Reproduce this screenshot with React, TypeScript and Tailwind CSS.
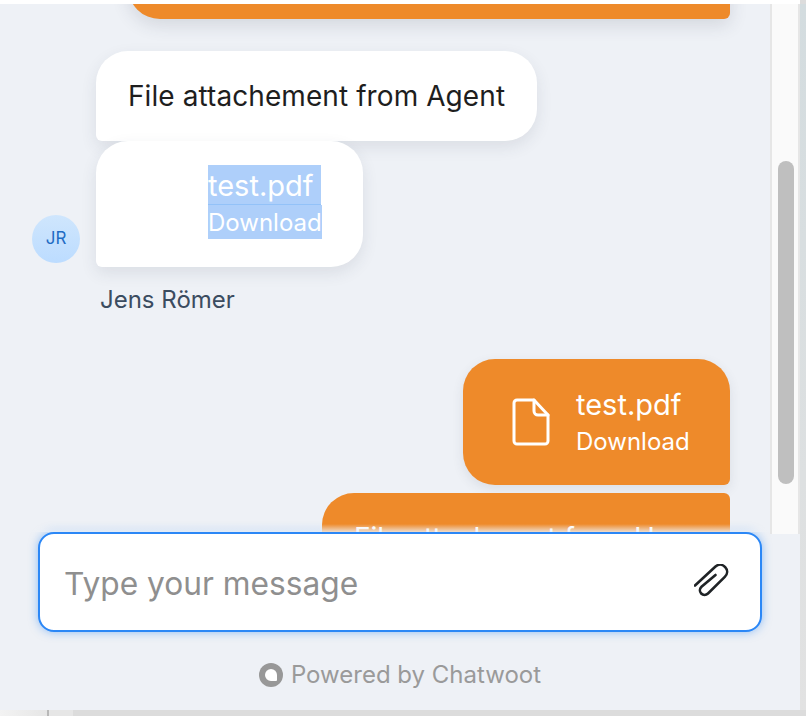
const font = { fontFamily: "Inter, 'Noto Sans', sans-serif" };

function FileIcon() {
  return (
    <svg width="40" height="48" viewBox="0 0 40 48" fill="none" stroke="white" strokeWidth="3" strokeLinejoin="round" strokeLinecap="round">
      <path d="M6 2h17l14 15v26a3 3 0 0 1-3 3H6a3 3 0 0 1-3-3V5a3 3 0 0 1 3-3z" />
      <path d="M23 2v11a4 4 0 0 0 4 4h10" />
    </svg>
  );
}

function AttachIcon() {
  return (
    <svg width="36" height="36" viewBox="0 0 36 36" fill="none" stroke="#1f2326" strokeWidth="2.6" strokeLinecap="round">
      <path d="M1 21.500 21.500 2.500c3-2.600 7-2.200 9.700 0.600 2.700 2.900 2.500 7-0.400 9.800L14 29.500c-2 1.900-5 1.900-6.800 0-1.800-1.900-1.700-4.800 0.300-6.700L21.500 11" />
    </svg>
  );
}

function ChatwootLogo() {
  return (
    <svg width="24" height="24" viewBox="0 0 24 24">
      <circle cx="12" cy="12" r="12" fill="#989898" />
      <path d="M12 6a6 6 0 0 1 6 6v5a1 1 0 0 1-1 1h-5a6 6 0 0 1 0-12z" fill="white" />
    </svg>
  );
}

function Scrollbar() {
  return (
    <div className="h-[530px] w-[30px] shrink-0 border-l-2 border-r-2 border-[#e6e6e6] bg-[#fafafa] px-[6px] pt-[157px]">
      <div className="h-[323px] w-4 rounded-full bg-[#bfbfbf]" />
    </div>
  );
}

export default function App() {
  return (
    <div className="flex h-[716px] w-[806px] flex-col overflow-hidden bg-[#dcdcdc]" style={font}>
      <div className="h-1 w-[800px] shrink-0 bg-white" />
      <div className="flex h-[706px] shrink-0">
        <div className="flex w-[800px] shrink-0 flex-col bg-[#eef1f6]">
          <div className="flex h-[528px] shrink-0">
            <div className="relative min-w-0 flex-1 overflow-hidden pl-8 pr-10">
              <div className="-mt-[45px] flex flex-col">
                <div className="ml-24 h-[60px] rounded-b-[32px] rounded-br-[6px] bg-[#ee8a2a] shadow-[0_6px_18px_rgba(50,60,80,0.14)]" />
                <div className="mt-8 flex items-end gap-4">
                  <div className="mb-1 flex h-12 w-12 items-center justify-center rounded-full bg-gradient-to-b from-[#cfe6fd] to-[#bcdcff] text-[17px] text-[#1f6cc4]">
                    JR
                  </div>
                  <div className="flex flex-col items-start">
                    <div className="flex h-[90px] w-[441px] items-center whitespace-nowrap rounded-[32px] rounded-bl-[6px] bg-white px-8 text-[28px] tracking-[0.08px] text-[#1e1e1e] shadow-[0_6px_16px_rgba(50,60,80,0.1)]">
                      File attachement from Agent
                    </div>
                    <div className="flex h-[126px] w-[267px] flex-col justify-center rounded-[32px] rounded-bl-[6px] bg-white pb-1 pl-28 text-white shadow-[0_6px_16px_rgba(50,60,80,0.1)]">
                      <span className="h-10 w-[113px] border-b border-[#93c2f8] bg-[#aecffa] text-[29px] leading-[42px]">test.pdf</span>
                      <span className="h-[34px] w-[114px] bg-[#aecffa] text-[24px] leading-[35px]">Download</span>
                    </div>
                  </div>
                </div>
                <div className="ml-[68px] mt-[17px] text-[24px] leading-8 text-[#3b4c60]">Jens Römer</div>
                <div className="mt-[43px] flex flex-col items-end">
                  <div className="flex h-[126px] w-[267px] items-center gap-[25px] rounded-[32px] rounded-br-[6px] bg-[#ee8a2a] pl-[48px] text-white shadow-[0_4px_12px_rgba(50,60,80,0.1)]">
                    <FileIcon />
                    <div className="flex flex-col">
                      <span className="text-[29px] leading-10">test.pdf</span>
                      <span className="text-[24px] leading-[34px]">Download</span>
                    </div>
                  </div>
                  <div className="mt-2 flex h-[90px] w-[408px] items-center rounded-[32px] rounded-tr-[6px] bg-[#ee8a2a] px-8 text-[28px] text-white">
                    <span className="whitespace-nowrap">File attachment from User</span>
                  </div>
                </div>
              </div>
              <div className="absolute bottom-0 left-0 right-0 h-2 bg-gradient-to-b from-transparent to-[#eef1f6]/80" />
            </div>
            <Scrollbar />
          </div>
          <div className="mx-[38px] flex h-[100px] shrink-0 items-center justify-between rounded-[16px] border-2 border-[#2b87f6] bg-white pl-6 pr-[30px] shadow-[0_0_10px_rgba(43,135,246,0.5)]">
            <span className="pt-[3px] text-[31.700px] text-[#8f8f8f]">Type your message</span>
            <AttachIcon />
          </div>
          <div className="flex h-[72px] items-center justify-center gap-2 pt-[14px] text-[24px] text-[#9a9a9a]">
            <ChatwootLogo />
            <span>Powered by Chatwoot</span>
          </div>
        </div>
        <div className="w-1.5 shrink-0 bg-gradient-to-b from-[#d3dcdf] to-[#e2e2e2]" />
      </div>
      <div className="flex h-1.5 shrink-0">
        <div className="w-[47px] bg-gradient-to-r from-[#f3f3f3] to-[#e6e6e6]" />
        <div className="w-0.5 bg-[#b8b8b8]" />
        <div className="w-6 bg-[#e6e6e6]" />
        <div className="flex-1 bg-[#dcdcdc]" />
      </div>
    </div>
  );
}
